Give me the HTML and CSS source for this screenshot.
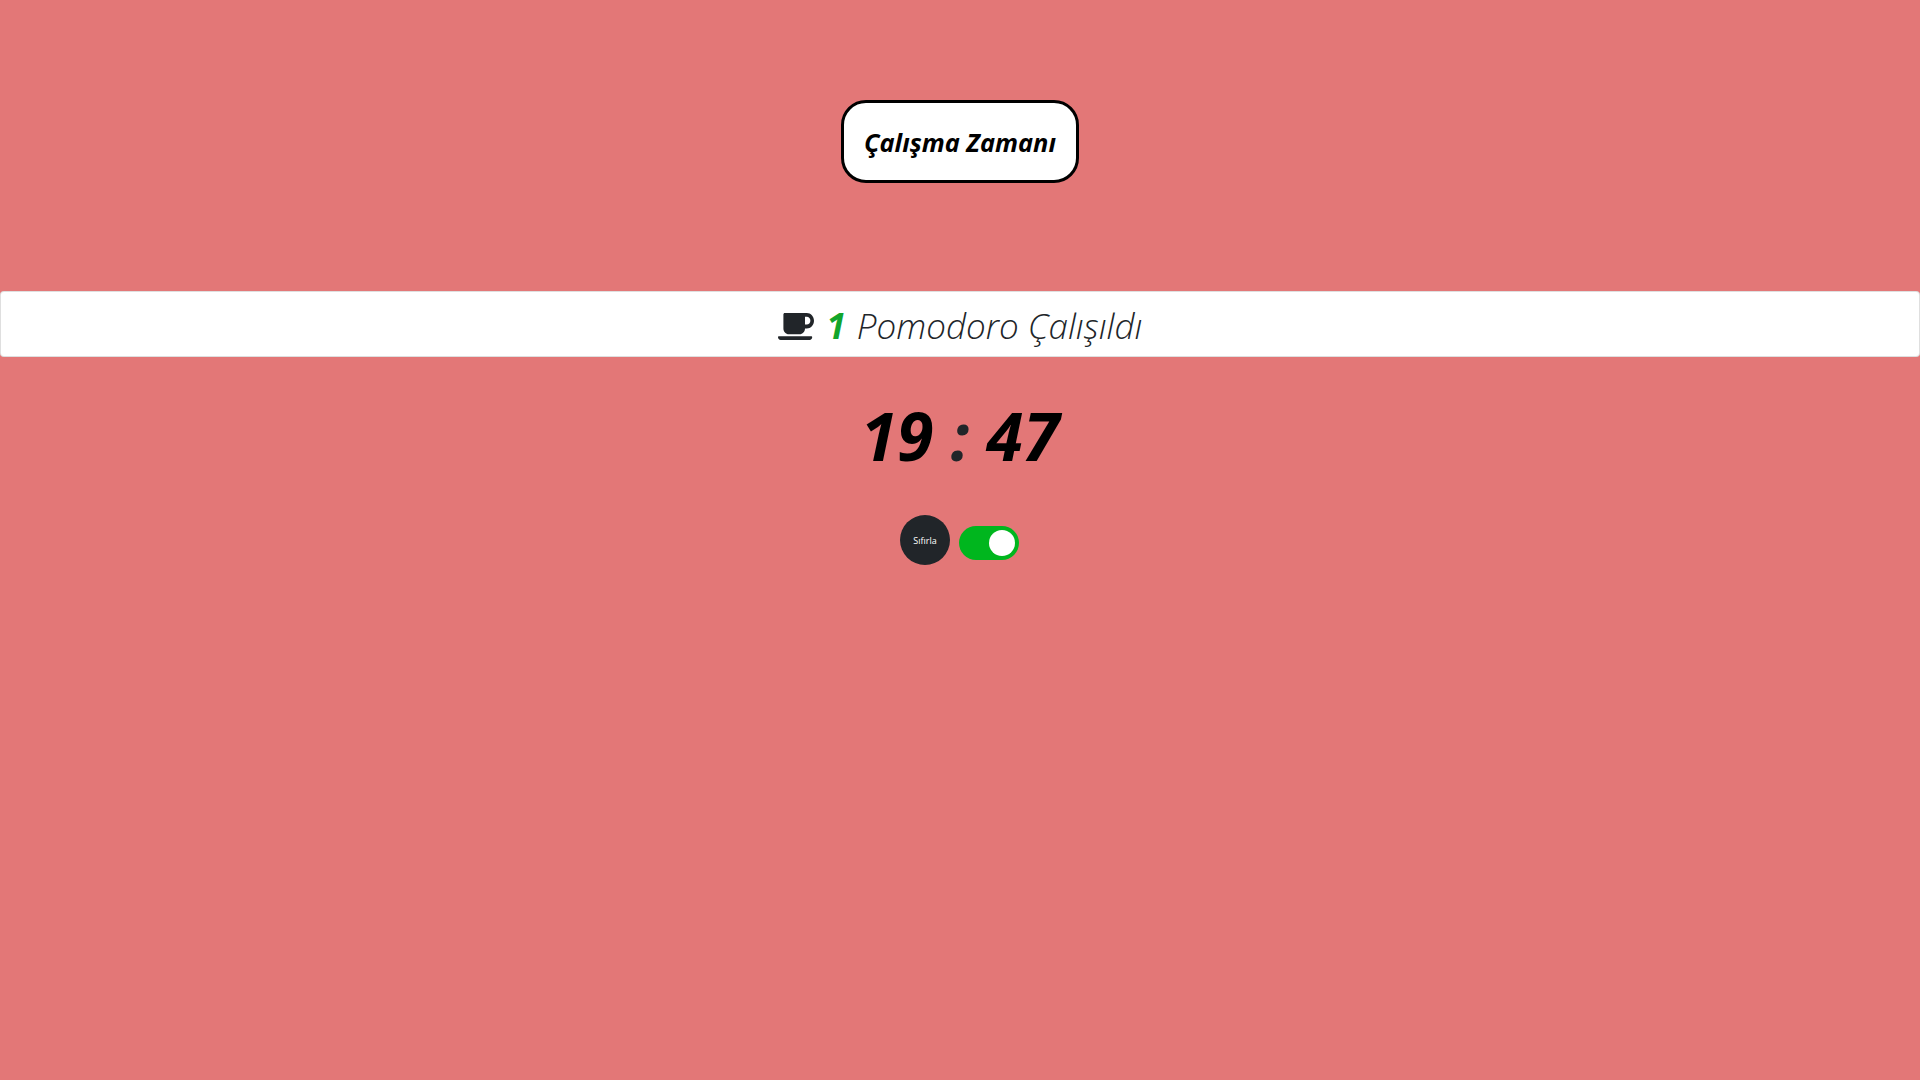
FILE: index.html
```html
<!DOCTYPE html>
<html lang="tr">
<head>
<meta charset="utf-8">
<title>Pomodoro</title>
<link rel="stylesheet" href="styles.css">
</head>
<body>
<main class="page">
  <h1 class="mode">Çalışma Zamanı</h1>
  <section class="counter">
    <svg class="cup" viewBox="0 0 640 512" preserveAspectRatio="none" aria-hidden="true"><path d="M192 384h192c53 0 96-43 96-96h32c70.6 0 128-57.4 128-128S582.6 32 512 32H120c-13.3 0-24 10.7-24 24v232c0 53 43 96 96 96zM512 96c35.3 0 64 28.7 64 64s-28.7 64-64 64h-32V96h32zm47.7 384H48.3c-47.6 0-61-64-36-64h583.3c25 0 11.8 64-35.9 64z"/></svg>
    <span class="count">1</span>
    <span class="label">Pomodoro Çalışıldı</span>
  </section>
  <div class="timer"><span>19</span> <span class="colon">:</span> <span>47</span></div>
  <div class="controls">
    <button class="reset">Sıfırla</button>
    <div class="switch"><span class="knob"></span></div>
  </div>
</main>
</body>
</html>
```
FILE: styles.css
```css
* { box-sizing: border-box; }
html, body { margin: 0; height: 100%; }
body {
  background: #e37777;
  color: #212529;
  font-family: "Open Sans", "Noto Sans", sans-serif;
}
.page { display: flex; flex-direction: column; align-items: center; min-height: 1080px; padding-top: 100px; }
.mode {
  margin: 0;
  width: 238px;
  height: 83px;
  display: flex;
  align-items: center;
  justify-content: center;
  background: #fff;
  border: 3px solid #000;
  border-radius: 25px;
  color: #000;
  font-size: 25.4px;
  font-style: italic;
  font-weight: 700;
}
.counter {
  margin-top: 108px;
  width: 100%;
  height: 66px;
  display: flex;
  align-items: center;
  justify-content: center;
  background: #fff;
  border: 1px solid rgba(0,0,0,.125);
  border-radius: 4px;
  font-size: 35px;
  font-style: italic;
  font-weight: 300;
}
.cup { width: 36px; height: 31px; fill: #212529; margin: 5px 13px 0 0; }
.count { color: #12a52b; font-weight: 700; margin: 3px 11px 0 0; }
.label { margin-top: 3px; }
.timer {
  margin-top: 36px;
  color: #000;
  font-size: 66px;
  font-style: italic;
  font-weight: 700;
  line-height: 84px;
  white-space: pre;
}
.colon { color: #212529; }
.controls { margin-top: 38px; width: 120px; display: flex; align-items: flex-start; gap: 9px; }
.reset {
  width: 50px;
  height: 50px;
  padding: 0;
  border: 0;
  border-radius: 50%;
  background: #212529;
  color: #fff;
  font-family: inherit;
  font-size: 9px;
  font-weight: 500;
}
.switch {
  position: relative;
  width: 60px;
  height: 34px;
  margin-top: 11px;
  border-radius: 17px;
  background: #00b61e;
}
.knob {
  position: absolute;
  top: 4px;
  right: 4px;
  width: 26px;
  height: 26px;
  border-radius: 50%;
  background: #fff;
}
```
